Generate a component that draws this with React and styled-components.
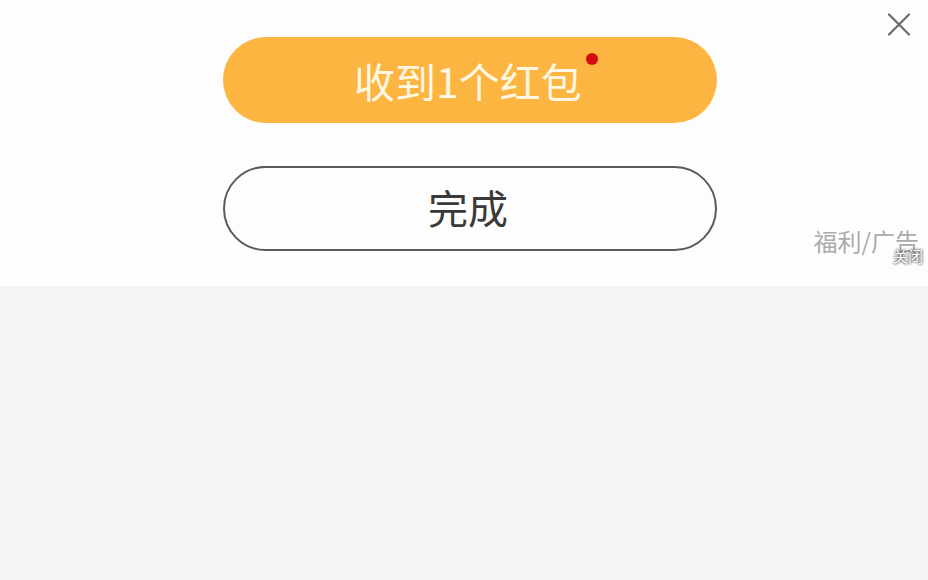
import React from "react";
import styled, { createGlobalStyle } from "styled-components";

const Global = createGlobalStyle`
  html, body { margin: 0; padding: 0; background: #f4f4f4; }
  body { font-family: "Noto Sans CJK SC", "Noto Sans", sans-serif; }
  #root { width: 928px; height: 580px; overflow: hidden; }
`;

const Page = styled.div`
  width: 928px;
  height: 580px;
  display: flex;
  flex-direction: column;
  background: #f4f4f4;
`;

const Panel = styled.div`
  position: relative;
  height: 286px;
  background: #fdfdfd;
  display: flex;
  justify-content: center;
`;

const Column = styled.div`
  display: flex;
  flex-direction: column;
  gap: 43px;
  padding-top: 37px;
  margin-left: 12px;
`;

const Pill = styled.button`
  box-sizing: border-box;
  width: 494px;
  height: ${(p) => (p.$primary ? "86px" : "85px")};
  border-radius: 43px;
  display: flex;
  align-items: center;
  justify-content: center;
  font-family: "Noto Sans CJK SC", "Noto Sans", sans-serif;
  font-size: ${(p) => (p.$primary ? "41px" : "40px")};
  padding: 0;
  cursor: pointer;
  background: ${(p) => (p.$primary ? "#fbb540" : "#fdfdfd")};
  color: ${(p) => (p.$primary ? "#fff7e4" : "#3a3a3a")};
  border: ${(p) => (p.$primary ? "none" : "2px solid #5a5a5a")};
`;

const Label = styled.span`
  position: relative;
  line-height: 1;
  margin-top: ${(p) => p.$dy || 0}px;
  margin-left: ${(p) => p.$dx || 0}px;
`;

const Dot = styled.span`
  position: absolute;
  right: -16px;
  top: -7px;
  width: 12px;
  height: 12px;
  border-radius: 50%;
  background: #d40c0c;
`;

const Close = styled.button`
  position: absolute;
  top: 12px;
  right: 16px;
  width: 26px;
  height: 26px;
  padding: 0;
  border: none;
  background: transparent;
  display: flex;
  align-items: center;
  justify-content: center;
`;

const AdTag = styled.div`
  position: absolute;
  right: 9px;
  top: 223px;
  font-size: 24px;
  color: #ababab;
  white-space: nowrap;
`;

const CloseHint = styled.div`
  position: absolute;
  left: 893px;
  top: 245px;
  font-size: 15px;
  color: #ffffff;
  white-space: nowrap;
  text-shadow: 0 0 2px #333, 0 0 3px #555;
`;

export default function App() {
  return (
    <>
      <Global />
      <Page>
        <Panel>
          <Column>
            <Pill $primary>
              <Label $dx={-4}>
                收到1个红包
                <Dot />
              </Label>
            </Pill>
            <Pill>
              <Label $dy={-3} $dx={-4}>完成</Label>
            </Pill>
          </Column>
          <Close aria-label="关闭">
            <svg width="24" height="24" viewBox="0 0 24 24">
              <path d="M2 1.5 L22 21.5 M22 1.5 L2 21.5" stroke="#6a6a6a" strokeWidth="2.2" strokeLinecap="round" />
            </svg>
          </Close>
          <AdTag>福利/广告</AdTag>
          <CloseHint>关闭</CloseHint>
        </Panel>
      </Page>
    </>
  );
}
